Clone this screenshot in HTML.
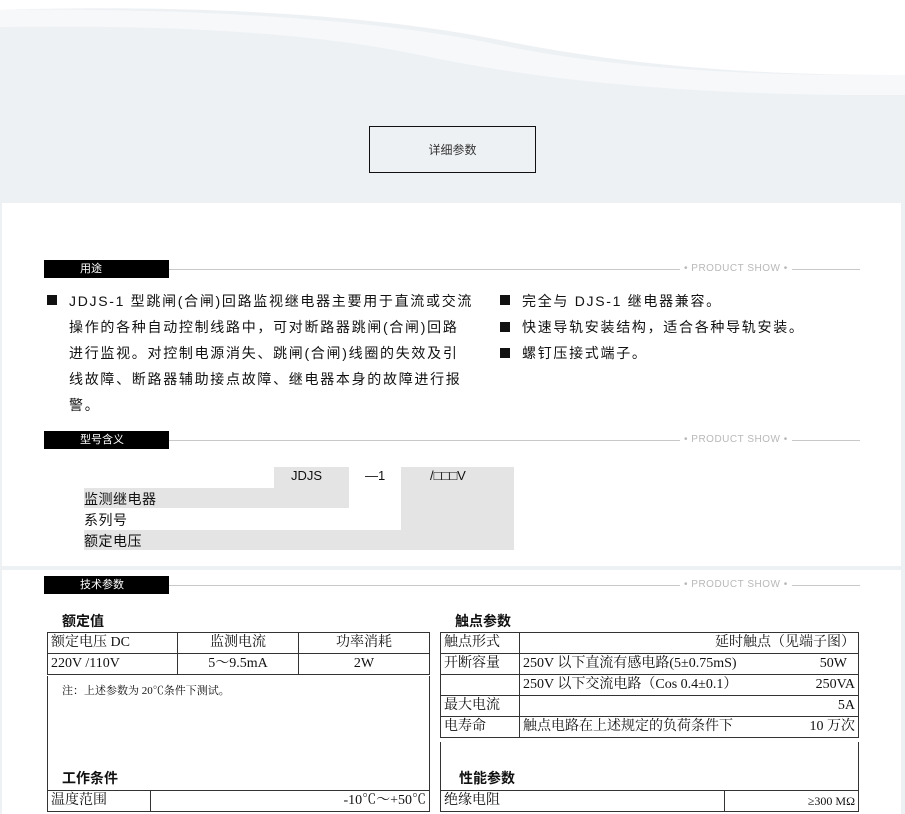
<!DOCTYPE html>
<html style="overflow:hidden;height:814px"><head><meta charset="utf-8"><style>
body{margin:0;width:905px;height:814px;overflow:hidden;background:#eef1f4;position:relative;font-family:"Liberation Sans","Noto Sans CJK SC",sans-serif;}
.a{position:absolute}
.panel{position:absolute;background:#fff;left:2px;width:899px}
.hd{position:absolute;left:44px;width:125px;height:18px;background:#000;color:#fff;font-size:11px;line-height:18px;text-indent:36px}
.ln{position:absolute;left:169px;width:691px;height:1px;background:#c8c8c8}
.ps{position:absolute;left:680px;background:#fff;color:#b8b8b8;font-size:10px;padding:0 4px;letter-spacing:.5px;line-height:12px}
.tx{position:absolute;font-size:14px;color:#111;white-space:nowrap;letter-spacing:1.7px}
.sq{position:absolute;width:10px;height:10px;background:#111}
.g{position:absolute;background:#e4e4e4}
.s{font-family:"Liberation Serif","Noto Serif CJK SC",serif;font-size:14px;color:#111}
table{position:absolute;border-collapse:collapse}
td{border:1.5px solid #333;padding:0 3px;height:20px;line-height:20px;white-space:nowrap;font-family:"Liberation Serif","Noto Serif CJK SC",serif;font-size:14px;color:#111}
.r{text-align:right}.c{text-align:center}
.bx{position:absolute;border-left:1.5px solid #333;border-right:1.5px solid #333}
.h2{position:absolute;font-weight:bold;font-size:14px;color:#111}
</style></head><body>
<svg class="a" style="left:0;top:0" width="905" height="100"><path d="M0 0H905V75C780 75 650 70 500 40C350 10 150 5 0 10Z" fill="#fff"/><path d="M0 27C150 25 300 30 420 55C560 85 720 96 905 95V75C760 76 620 70 500 45C360 15 150 8 0 10Z" fill="#f6f8fa"/></svg>
<div class="a" style="left:369px;top:126px;width:165px;height:45px;border:1px solid #111;font-size:12px;color:#333;text-align:center;line-height:47px">详细参数</div>

<div class="panel" style="top:203px;height:363px"></div>
<div class="panel" style="top:570px;height:244px"></div>

<div class="ln" style="top:269px"></div><div class="ps" style="top:263px">• PRODUCT SHOW •</div>
<div class="hd" style="top:260px">用途</div>
<div class="sq" style="left:47px;top:295px"></div><div class="sq" style="left:500px;top:295px"></div><div class="sq" style="left:500px;top:322px"></div><div class="sq" style="left:500px;top:348px"></div>
<div class="tx" style="left:69px;top:291px">JDJS-1 型跳闸(合闸)回路监视继电器主要用于直流或交流</div>
<div class="tx" style="left:69px;top:317px">操作的各种自动控制线路中，可对断路器跳闸(合闸)回路</div>
<div class="tx" style="left:69px;top:343px">进行监视。对控制电源消失、跳闸(合闸)线圈的失效及引</div>
<div class="tx" style="left:69px;top:369px">线故障、断路器辅助接点故障、继电器本身的故障进行报</div>
<div class="tx" style="left:69px;top:395px">警。</div>
<div class="tx" style="left:522px;top:291px">完全与 DJS-1 继电器兼容。</div>
<div class="tx" style="left:522px;top:317px">快速导轨安装结构，适合各种导轨安装。</div>
<div class="tx" style="left:522px;top:343px">螺钉压接式端子。</div>

<div class="ln" style="top:440px"></div><div class="ps" style="top:434px">• PRODUCT SHOW •</div>
<div class="hd" style="top:431px;text-indent:36px">型号含义</div>
<div class="g" style="left:274px;top:467px;width:75px;height:41px"></div>
<div class="g" style="left:84px;top:488px;width:265px;height:20px"></div>
<div class="g" style="left:401px;top:467px;width:113px;height:83px"></div>
<div class="g" style="left:84px;top:530px;width:430px;height:20px"></div>
<div class="tx" style="left:291px;top:468px;font-size:13px;letter-spacing:0">JDJS</div>
<div class="tx" style="left:365px;top:468px;font-size:13px;letter-spacing:0">—1</div>
<div class="tx" style="left:430px;top:468px;font-size:13px;letter-spacing:0">/□□□V</div>
<div class="tx" style="left:84px;top:489px;letter-spacing:.5px">监测继电器</div>
<div class="tx" style="left:84px;top:510px;letter-spacing:.5px">系列号</div>
<div class="tx" style="left:84px;top:531px;letter-spacing:.5px">额定电压</div>

<div class="ln" style="top:585px"></div><div class="ps" style="top:579px">• PRODUCT SHOW •</div>
<div class="hd" style="top:576px">技术参数</div>

<div class="h2" style="left:62px;top:611px">额定值</div>
<div class="h2" style="left:455px;top:611px">触点参数</div>
<table style="left:47px;top:632px;width:383px">
<tr><td style="width:123px">额定电压 DC</td><td class="c" style="width:114px">监测电流</td><td class="c">功率消耗</td></tr>
<tr><td>220V /110V</td><td class="c">5～9.5mA</td><td class="c">2W</td></tr>
</table>
<div class="bx" style="left:47px;top:676px;width:381px;height:114px"></div>
<div class="a s" style="left:62px;top:682px;font-size:11px">注：上述参数为 20℃条件下测试。</div>
<table style="left:440px;top:632px;width:419px">
<tr><td style="width:72px">触点形式</td><td class="r">延时触点（见端子图）</td></tr>
<tr><td>开断容量</td><td>250V 以下直流有感电路(5±0.75mS)<span style="float:right;margin-right:8px">50W</span></td></tr>
<tr><td></td><td>250V 以下交流电路（Cos 0.4±0.1）<span style="float:right">250VA</span></td></tr>
<tr><td>最大电流</td><td class="r">5A</td></tr>
<tr><td>电寿命</td><td>触点电路在上述规定的负荷条件下<span style="float:right">10 万次</span></td></tr>
</table>
<div class="bx" style="left:440px;top:742px;width:417px;height:48px"></div>
<div class="h2" style="left:62px;top:768px">工作条件</div>
<div class="h2" style="left:459px;top:768px">性能参数</div>
<table style="left:47px;top:790px;width:383px">
<tr><td style="width:96px">温度范围</td><td class="r">-10℃～+50℃</td></tr>
</table>
<table style="left:440px;top:790px;width:419px">
<tr><td style="width:277px">绝缘电阻</td><td class="r" style="font-size:12px">≥300 MΩ</td></tr>
</table>
</body></html>
